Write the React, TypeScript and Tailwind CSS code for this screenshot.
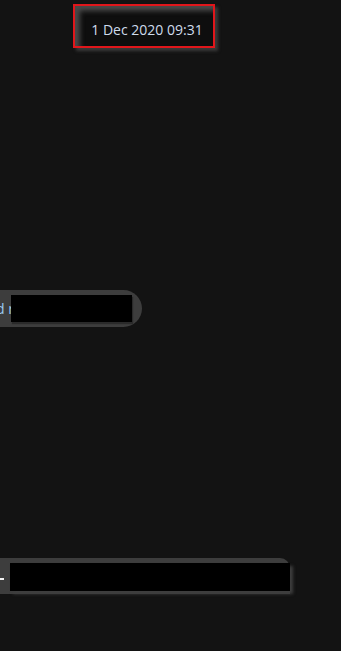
export default function App() {
  return (
    <div
      className="min-h-screen w-full overflow-hidden bg-[#131313] text-[13px]"
      style={{ fontFamily: '"Open Sans", "Noto Sans", sans-serif' }}
    >
      {/* date stamp */}
      <div className="pt-[4px] pl-[73px]">
        <div className="flex h-[44px] w-[142px] items-center justify-center border-2 border-[#e0161b] bg-[#0e0e0e] shadow-[inset_5px_5px_5px_#4a4a4a,3px_3px_3px_#3a3a3a]">
          <span className="pl-[6px] pt-[7px] text-[14px] text-[#cfdcec]">1 Dec 2020 09:31</span>
        </div>
      </div>

      {/* message 1 */}
      <div className="mt-[242px] flex">
        <div className="flex h-[37px] items-center rounded-r-full bg-[#3d3d3d] pr-[10px]">
          <span className="-ml-[4px] whitespace-nowrap text-[14px] text-[#9ccbf2]">d r</span>
          <div className="-ml-[3px] h-[27px] w-[121px] bg-black shadow-[1px_2px_1px_#2a2a2a]" />
        </div>
      </div>

      {/* message 2 */}
      <div className="mt-[231px] flex">
        <div className="flex h-[36px] w-[290px] items-end rounded-tr-[10px] bg-[#3d3d3d] pb-[3px]">
          <span className="mb-[11px] h-[2px] w-[4px] bg-[#f2f2f2]" />
          <div className="ml-[6px] h-[28px] w-[282px] bg-black shadow-[3px_3px_3px_#3e3e3e]" />
        </div>
      </div>
    </div>
  );
}
